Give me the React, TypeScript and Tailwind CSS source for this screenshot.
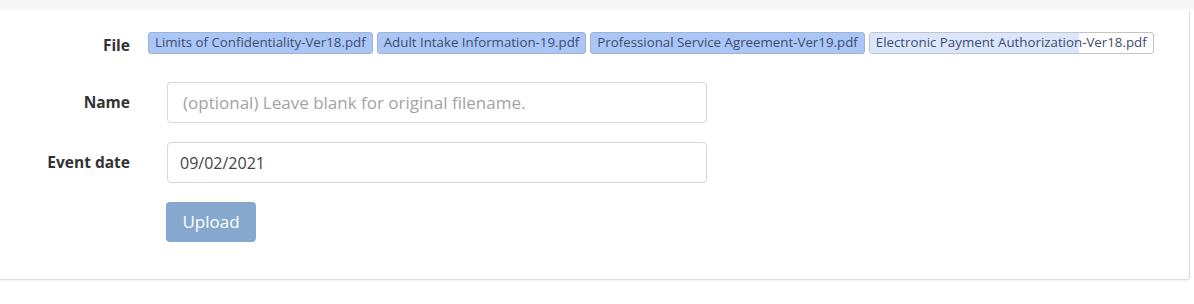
import React from 'react';

type Attachment = {
  name: string;
  progress: number;
};

const files: Attachment[] = [
  { name: 'Limits of Confidentiality-Ver18.pdf', progress: 100 },
  { name: 'Adult Intake Information-19.pdf', progress: 100 },
  { name: 'Professional Service Agreement-Ver19.pdf', progress: 100 },
  { name: 'Electronic Payment Authorization-Ver18.pdf', progress: 74 },
];

function FileChip({ file }: { file: Attachment }) {
  const done = file.progress >= 100;
  return (
    <span
      className={
        done
          ? 'relative inline-flex h-[22px] items-center rounded-[3px] border border-[#a3b3cf] bg-[#a9c6f7] px-[6px] text-[13.3px] leading-none text-[#3f4d6c]'
          : 'relative inline-flex h-[22px] items-center overflow-hidden rounded-[3px] border border-[#c4c4c4] bg-white px-[6px] text-[13.3px] leading-none text-[#3f4d6c]'
      }
    >
      {/* upload progress */}
      {!done && (
        <span className="absolute inset-y-0 left-0 bg-[#d9e6fc]" style={{ width: `${file.progress}%` }} />
      )}
      <span className="relative whitespace-nowrap">{file.name}</span>
    </span>
  );
}

export default function App() {
  return (
    <div className="min-h-[304px] bg-white" style={{ fontFamily: '"Open Sans", "Liberation Sans", sans-serif' }}>
      <div className="h-[10px] bg-[#f7f7f7]" />
      <div className="mr-[4px] rounded-br-[4px] border-r border-b border-[#dedede] bg-white pt-[22px] pb-[37px] shadow-[0_1px_2px_rgba(0,0,0,0.06)]">
        {/* File */}
        <div className="flex h-[22px] items-center">
          <label className="w-[130px] pt-[6px] text-right text-[15.5px] font-bold leading-none text-[#333]">File</label>
          <div className="ml-[18px] flex gap-[4px]">
            {files.map((f) => (
              <FileChip key={f.name} file={f} />
            ))}
          </div>
        </div>

        {/* Name */}
        <div className="mt-[28px] flex h-[41px] items-center">
          <label className="w-[130px] text-right text-[15.5px] font-bold leading-none text-[#333]">Name</label>
          <input
            type="text"
            className="ml-[37px] h-[41px] w-[540px] rounded-[4px] border border-[#d6d6d6] px-[15px] text-[16px] text-[#555] outline-none placeholder:text-[17px] placeholder:text-[#a3a3a3]"
            placeholder="(optional) Leave blank for original filename."
          />
        </div>

        {/* Event date */}
        <div className="mt-[19px] flex h-[41px] items-center">
          <label className="w-[130px] text-right text-[15.5px] font-bold leading-none text-[#333]">Event date</label>
          <input
            type="text"
            className="ml-[37px] h-[41px] w-[540px] rounded-[4px] border border-[#d6d6d6] px-[12px] text-[16px] text-[#444] outline-none"
            defaultValue="09/02/2021"
          />
        </div>

        <div className="mt-[19px] flex h-[40px] pl-[166px]">
          <button className="h-[40px] w-[90px] rounded-[4px] bg-[#86a7ce] text-[17px] text-white">Upload</button>
        </div>
      </div>
    </div>
  );
}
